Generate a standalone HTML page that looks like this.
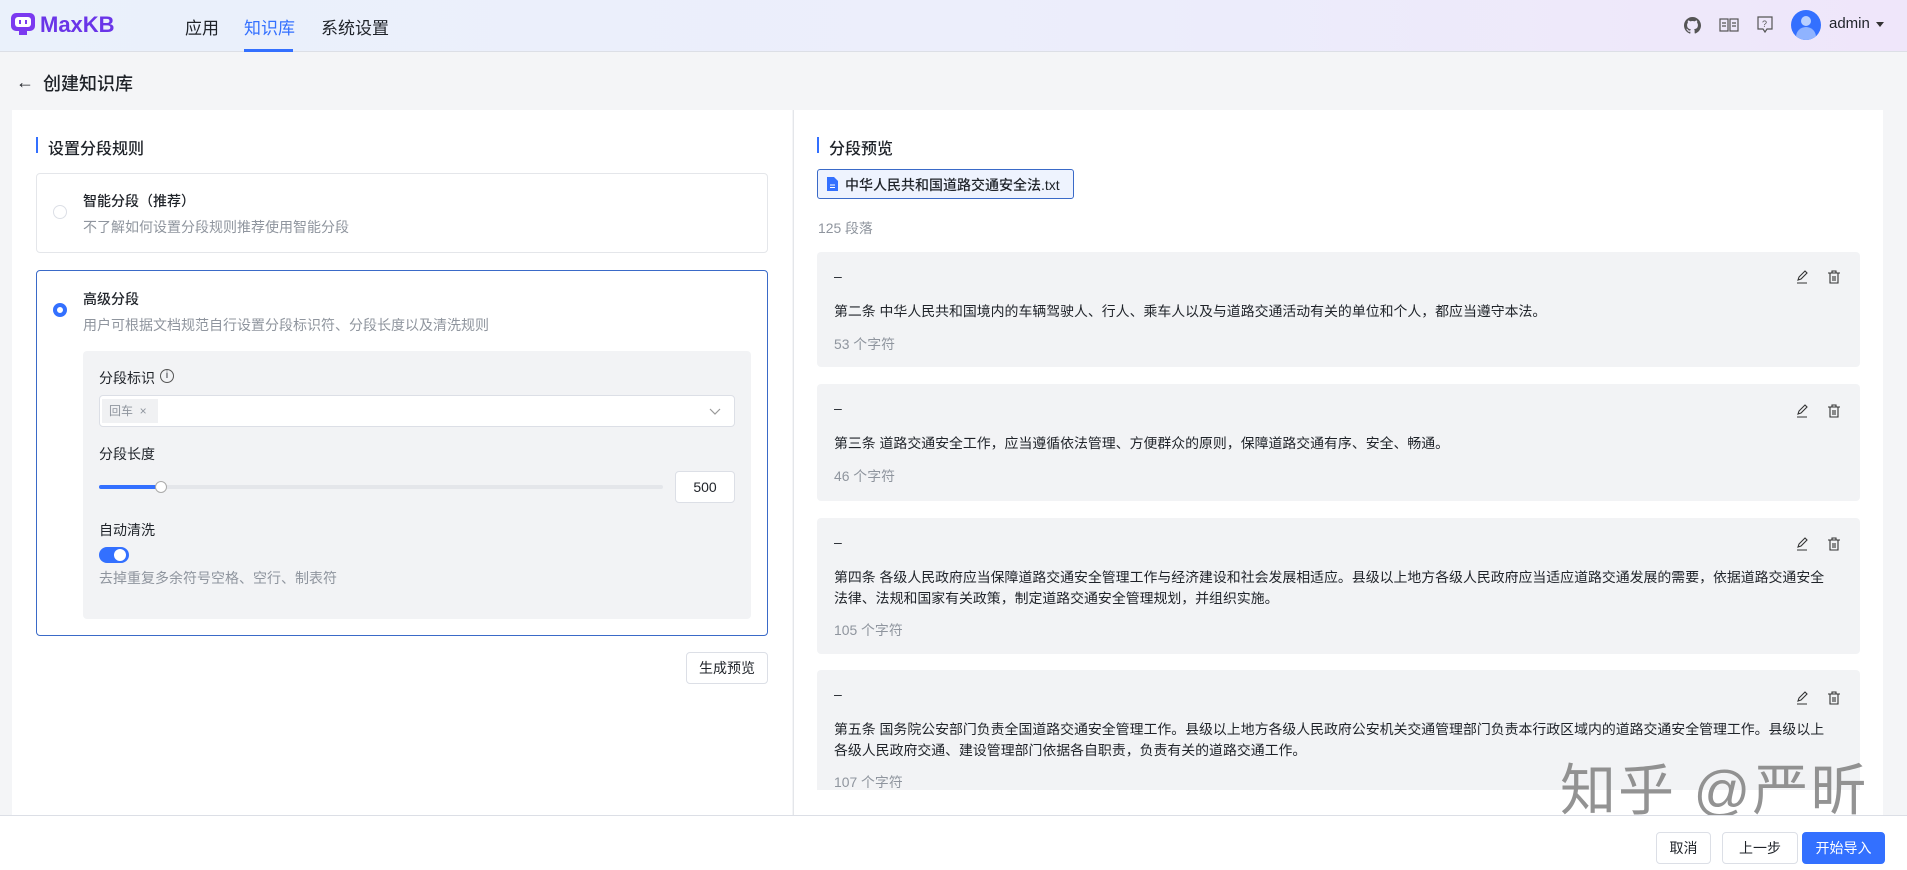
<!DOCTYPE html>
<html><head><meta charset="utf-8"><style>
*{box-sizing:border-box;margin:0;padding:0}
body{width:1907px;height:870px;overflow:hidden;background:#f4f5f7;font-family:"Liberation Sans","Noto Sans CJK SC",sans-serif;color:#1f2329;position:relative}
.a{position:absolute}
.hdr{left:0;top:0;width:1907px;height:52px;background:linear-gradient(90deg,#eaf1fb,#ecedfb 60%,#efe6fa);border-bottom:1px solid #dcdfe6}
.nav{font-size:17px;top:14px;color:#1f2329;white-space:nowrap}
.t14{font-size:14px;white-space:nowrap}
.g{color:#8f959e}
.seg{left:817px;width:1043px;background:#f2f3f5;border-radius:4px}
.seg .dash{position:absolute;left:17px;top:16px;font-size:14px}
.seg .tx{position:absolute;left:17px;top:49px;right:28px;font-size:13.9px;line-height:21px;color:#1f2329}
.seg .cnt{position:absolute;left:17px;font-size:13.9px;color:#8f959e}
.btn{border:1px solid #dcdfe6;border-radius:4px;background:#fff;font-size:14px;text-align:center;line-height:30px;height:32px}
</style></head><body>
<div class="a hdr"></div>
<svg class="a" style="left:10px;top:12px" width="26" height="24" viewBox="0 0 26 24"><rect x="1" y="1" width="24" height="18" rx="5" fill="#7b3af0"/><rect x="5" y="5" width="16" height="10" rx="3" fill="#fff"/><rect x="9" y="8" width="2" height="4" fill="#7b3af0"/><rect x="15" y="8" width="2" height="4" fill="#7b3af0"/><rect x="9" y="19" width="8" height="4" fill="#7b3af0"/></svg>
<div class="a" style="left:40px;top:12px;font-size:22px;font-weight:bold;color:#6a35e8">MaxKB</div>
<div class="a nav" style="left:185px">应用</div>
<div class="a nav" style="left:244px;color:#3370ff">知识库</div>
<div class="a" style="left:244px;top:49px;width:49px;height:3px;background:#3370ff"></div>
<div class="a nav" style="left:321px">系统设置</div>
<svg class="a" style="left:1684px;top:17px" width="17" height="17" viewBox="0 0 16 16"><path fill="#555" d="M8 0C3.6 0 0 3.6 0 8c0 3.5 2.3 6.5 5.5 7.6.4.1.5-.2.5-.4v-1.4c-2.2.5-2.7-1-2.7-1-.4-.9-.9-1.2-.9-1.2-.7-.5.1-.5.1-.5.8.1 1.2.8 1.2.8.7 1.2 1.9.9 2.3.7.1-.5.3-.9.5-1.1-1.8-.2-3.6-.9-3.6-4 0-.9.3-1.6.8-2.1-.1-.2-.4-1 .1-2.1 0 0 .7-.2 2.2.8.6-.2 1.3-.3 2-.3s1.4.1 2 .3c1.5-1 2.2-.8 2.2-.8.4 1.1.2 1.9.1 2.1.5.6.8 1.3.8 2.1 0 3.1-1.9 3.7-3.6 3.9.3.3.5.8.5 1.5v2.2c0 .2.1.5.6.4C13.7 14.5 16 11.5 16 8c0-4.4-3.6-8-8-8z"/></svg>
<svg class="a" style="left:1719px;top:17px" width="20" height="16" viewBox="0 0 20 16" fill="none" stroke="#555" stroke-width="1.2"><rect x="1" y="2" width="8" height="12"/><rect x="11" y="2" width="8" height="12"/><path d="M3 6h4M3 9h4M13 6h4M13 9h4"/></svg>
<svg class="a" style="left:1757px;top:16px" width="16" height="18" viewBox="0 0 16 18" fill="none" stroke="#555" stroke-width="1.2"><path d="M1 1h14v12H10l-2 3-2-3H1z"/><text x="5" y="11" font-size="9" fill="#555" stroke="none">?</text></svg>
<div class="a" style="left:1791px;top:10px;width:30px;height:30px;border-radius:50%;background:#3370ff;overflow:hidden"><div class="a" style="left:10px;top:6px;width:10px;height:10px;border-radius:50%;background:#b8d0ff"></div><div class="a" style="left:5px;top:17px;width:20px;height:14px;border-radius:10px 10px 0 0;background:#8fb3ff"></div></div>
<div class="a" style="left:1829px;top:15px;font-size:15px;color:#1f2329">admin</div>
<div class="a" style="left:1876px;top:22px;width:0;height:0;border:4px solid transparent;border-top:5px solid #333"></div>

<div class="a" style="left:16px;top:72px;font-size:18px">←</div>
<div class="a" style="left:43px;top:70px;font-size:18px;font-weight:500">创建知识库</div>

<div class="a" style="left:12px;top:110px;width:780px;height:705px;background:#fff"></div>
<div class="a" style="left:793px;top:110px;width:1090px;height:705px;background:#fff;border-left:1px solid #e4e6ea"></div>

<div class="a" style="left:36px;top:137px;width:2px;height:16px;background:#3370ff"></div>
<div class="a" style="left:48px;top:135px;font-size:16px;font-weight:500">设置分段规则</div>
<div class="a" style="left:36px;top:173px;width:732px;height:80px;border:1px solid #e4e6ea;border-radius:4px"></div>
<div class="a" style="left:53px;top:205px;width:14px;height:14px;border:1px solid #dcdfe6;border-radius:50%"></div>
<div class="a t14" style="left:83px;top:191px;font-weight:500">智能分段（推荐）</div>
<div class="a t14 g" style="left:83px;top:217px">不了解如何设置分段规则推荐使用智能分段</div>
<div class="a" style="left:36px;top:270px;width:732px;height:366px;border:1px solid #3a6ac8;border-radius:4px"></div>
<div class="a" style="left:53px;top:303px;width:14px;height:14px;border:4px solid #3370ff;border-radius:50%"></div>
<div class="a t14" style="left:83px;top:289px;font-weight:500">高级分段</div>
<div class="a t14 g" style="left:83px;top:315px">用户可根据文档规范自行设置分段标识符、分段长度以及清洗规则</div>
<div class="a" style="left:83px;top:351px;width:668px;height:268px;background:#f2f3f5;border-radius:4px"></div>
<div class="a t14" style="left:99px;top:368px">分段标识</div>
<div class="a" style="left:160px;top:369px;width:14px;height:14px;border:1px solid #555;border-radius:50%;font-size:10px;text-align:center;line-height:12px">i</div>
<div class="a" style="left:99px;top:395px;width:636px;height:32px;background:#fff;border:1px solid #dcdfe6;border-radius:4px"></div>
<div class="a" style="left:102px;top:399px;width:56px;height:24px;background:#f0f1f3;font-size:12px;color:#8f959e;line-height:24px;padding-left:7px;white-space:nowrap">回车 &nbsp;×</div>
<svg class="a" style="left:709px;top:405px" width="12" height="12" viewBox="0 0 12 12"><path d="M1 4l5 5 5-5" fill="none" stroke="#999" stroke-width="1.2"/></svg>
<div class="a t14" style="left:99px;top:444px">分段长度</div>
<div class="a" style="left:99px;top:485px;width:564px;height:4px;background:#e4e6ea;border-radius:2px"></div>
<div class="a" style="left:99px;top:485px;width:58px;height:4px;background:#3370ff;border-radius:2px"></div>
<div class="a" style="left:155px;top:481px;width:12px;height:12px;background:#fff;border:1px solid #aaa;border-radius:50%"></div>
<div class="a" style="left:675px;top:471px;width:60px;height:32px;background:#fff;border:1px solid #dcdfe6;border-radius:4px;font-size:14px;text-align:center;line-height:30px">500</div>
<div class="a t14" style="left:99px;top:520px">自动清洗</div>
<div class="a" style="left:99px;top:547px;width:30px;height:16px;background:#3370ff;border-radius:8px"><div class="a" style="left:15px;top:2px;width:12px;height:12px;border-radius:50%;background:#fff"></div></div>
<div class="a t14 g" style="left:99px;top:568px">去掉重复多余符号空格、空行、制表符</div>
<div class="a btn" style="left:686px;top:652px;width:82px">生成预览</div>

<div class="a" style="left:817px;top:137px;width:2px;height:16px;background:#3370ff"></div>
<div class="a" style="left:829px;top:135px;font-size:16px;font-weight:500">分段预览</div>
<div class="a" style="left:817px;top:169px;width:257px;height:30px;background:#eef3fe;border:1px solid #3a6ac8;border-radius:3px"></div>
<svg class="a" style="left:827px;top:177px" width="11" height="14" viewBox="0 0 11 14"><path d="M0 0h7l4 4v10H0z" fill="#3370ff"/><path d="M3 8h5M3 10.5h5" stroke="#fff"/></svg>
<div class="a t14" style="left:845px;top:175px;font-weight:500">中华人民共和国道路交通安全法.txt</div>
<div class="a g" style="left:818px;top:218px;font-size:13.9px">125 段落</div>

<div style="position:absolute;left:817px;top:250px;width:1043px;height:540px;overflow:hidden">
<div class="a seg" style="left:0;top:2px;height:115px"><div class="dash">–</div><div class="tx">第二条 中华人民共和国境内的车辆驾驶人、行人、乘车人以及与道路交通活动有关的单位和个人，都应当遵守本法。</div><div class="cnt" style="top:82px">53 个字符</div></div>
<div class="a seg" style="left:0;top:134px;height:117px"><div class="dash">–</div><div class="tx">第三条 道路交通安全工作，应当遵循依法管理、方便群众的原则，保障道路交通有序、安全、畅通。</div><div class="cnt" style="top:82px">46 个字符</div></div>
<div class="a seg" style="left:0;top:268px;height:136px"><div class="dash">–</div><div class="tx">第四条 各级人民政府应当保障道路交通安全管理工作与经济建设和社会发展相适应。县级以上地方各级人民政府应当适应道路交通发展的需要，依据道路交通安全法律、法规和国家有关政策，制定道路交通安全管理规划，并组织实施。</div><div class="cnt" style="top:102px">105 个字符</div></div>
<div class="a seg" style="left:0;top:420px;height:136px"><div class="dash">–</div><div class="tx">第五条 国务院公安部门负责全国道路交通安全管理工作。县级以上地方各级人民政府公安机关交通管理部门负责本行政区域内的道路交通安全管理工作。县级以上各级人民政府交通、建设管理部门依据各自职责，负责有关的道路交通工作。</div><div class="cnt" style="top:102px">107 个字符</div></div>
</div>
<svg width="0" height="0" style="position:absolute"><defs>
<symbol id="pen" viewBox="0 0 14 14"><path d="M3 10l1-3 6-6 2 2-6 6zM2 13h10" fill="none" stroke="#333" stroke-width="1.1"/></symbol>
<symbol id="bin" viewBox="0 0 14 14"><path d="M1 3h12M5 3V1h4v2M3 3v10h8V3M6 6v5M8 6v5" fill="none" stroke="#333" stroke-width="1.1"/></symbol></defs></svg>
<svg class="a" style="left:1795px;top:270px" width="14" height="14"><use href="#pen"/></svg><svg class="a" style="left:1827px;top:270px" width="14" height="14"><use href="#bin"/></svg>
<svg class="a" style="left:1795px;top:404px" width="14" height="14"><use href="#pen"/></svg><svg class="a" style="left:1827px;top:404px" width="14" height="14"><use href="#bin"/></svg>
<svg class="a" style="left:1795px;top:537px" width="14" height="14"><use href="#pen"/></svg><svg class="a" style="left:1827px;top:537px" width="14" height="14"><use href="#bin"/></svg>
<svg class="a" style="left:1795px;top:691px" width="14" height="14"><use href="#pen"/></svg><svg class="a" style="left:1827px;top:691px" width="14" height="14"><use href="#bin"/></svg>

<div class="a" style="left:1560px;top:746px;font-size:56px;color:rgba(120,120,120,.8);letter-spacing:2px;white-space:nowrap">知乎 @严昕</div>

<div class="a" style="left:0;top:815px;width:1907px;height:55px;background:#fff;border-top:1px solid #dcdfe6"></div>
<div class="a btn" style="left:1656px;top:832px;width:55px">取消</div>
<div class="a btn" style="left:1722px;top:832px;width:76px">上一步</div>
<div class="a btn" style="left:1802px;top:832px;width:83px;background:#3370ff;border-color:#3370ff;color:#fff">开始导入</div>
</body></html>
